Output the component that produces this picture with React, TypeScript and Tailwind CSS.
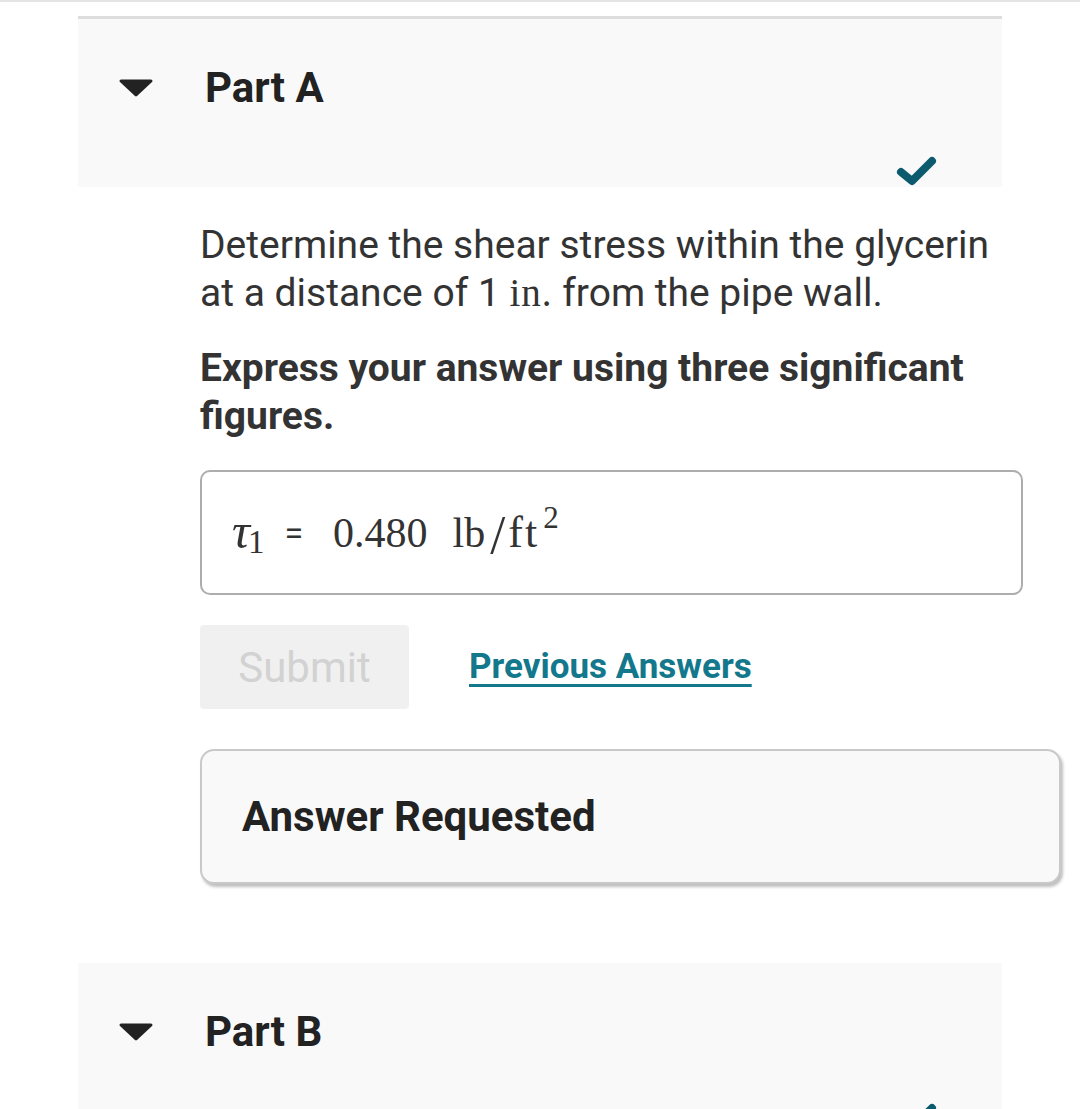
import React from "react";

function Caret() {
  return (
    <svg width="36" height="20" viewBox="0 0 36 20" className="shrink-0">
      <polygon points="3,3 33,3 18,17" fill="#222" stroke="#222" strokeWidth="3" strokeLinejoin="round" />
    </svg>
  );
}

function Check() {
  return (
    <svg width="46" height="34" viewBox="0 0 46 34">
      <polyline
        points="7,18 18,27 38,7"
        fill="none"
        stroke="#0b5a6d"
        strokeWidth="8"
        strokeLinecap="round"
        strokeLinejoin="round"
      />
    </svg>
  );
}

function PartHeader({ label, bordered }: { label: string; bordered?: boolean }) {
  return (
    <section
      className={
        bordered
          ? "w-[924px] h-[171px] bg-[#f9f9f9] border-t-[3px] border-[#dddddd] flex flex-col"
          : "w-[924px] h-[171px] bg-[#f9f9f9] flex flex-col"
      }
    >
      <div className="flex items-center pt-[48px] pl-[40px]">
        <Caret />
        <h2 className="ml-[51px] text-[42px] leading-[42px] font-bold text-[#222]">{label}</h2>
      </div>
      <div className="mt-auto self-end mr-[62px] mb-[-1px]">
        <Check />
      </div>
    </section>
  );
}

export default function App() {
  return (
    <div className="min-h-screen bg-white font-['Roboto',sans-serif] text-[#333]">
      <div className="h-[2px] bg-[#e4e4e4]" />
      <div className="pt-[14px] pl-[78px]">
        <PartHeader label="Part A" bordered />

        <div className="ml-[122px]">
          <p className="mt-[34px] w-[812px] text-[39px] leading-[48px] text-[#333]">
            Determine the shear stress within the glycerin at a distance of 1{" "}
            <span className="font-['Liberation_Serif',serif] tracking-[1px]">in.</span> from the pipe wall.
          </p>
          <p className="mt-[27px] w-[812px] text-[39px] leading-[48px] font-bold text-[#333]">
            Express your answer using three significant figures.
          </p>

          <div className="mt-[30px] w-[823px] h-[125px] border-2 border-[#adadad] rounded-[10px] bg-white flex items-center pl-[30px] font-['Liberation_Serif',serif] text-[#333]">
            <span className="italic text-[50px] leading-none relative top-[-2px]">τ</span>
            <span className="ml-[-2px] text-[33px] leading-none relative top-[10px]">1</span>
            <span className="ml-[20px] font-['Roboto',sans-serif] text-[34px] leading-none">=</span>
            <span className="ml-[30px] text-[42px] leading-none">0.480</span>
            <span className="ml-[25px] text-[42px] leading-none">lb</span>
            <span className="ml-[5px] text-[54px] leading-none relative top-[2px]">/</span>
            <span className="ml-[3px] text-[44px] leading-none tracking-[2px]">ft</span>
            <span className="ml-[4px] text-[31px] leading-none relative top-[-15px]">2</span>
          </div>

          <div className="mt-[30px] flex items-center">
            <button className="w-[209px] h-[84px] bg-[#f0f0f0] rounded-[4px] text-[42px] text-[#d2d2d2]">
              Submit
            </button>
            <a className="ml-[60px] text-[35px] font-bold text-[#13788c] underline decoration-[3px] underline-offset-[6px]">
              Previous Answers
            </a>
          </div>

          <div className="mt-[40px] w-[861px] h-[135px] border-2 border-[#c9c9c9] rounded-[14px] bg-[#f9f9f9] shadow-[2px_3px_3px_rgba(0,0,0,0.25)] flex items-center pl-[40px]">
            <span className="text-[42px] font-bold text-[#222]">Answer Requested</span>
          </div>
        </div>

        <div className="mt-[79px]">
          <PartHeader label="Part B" />
        </div>
      </div>
    </div>
  );
}
